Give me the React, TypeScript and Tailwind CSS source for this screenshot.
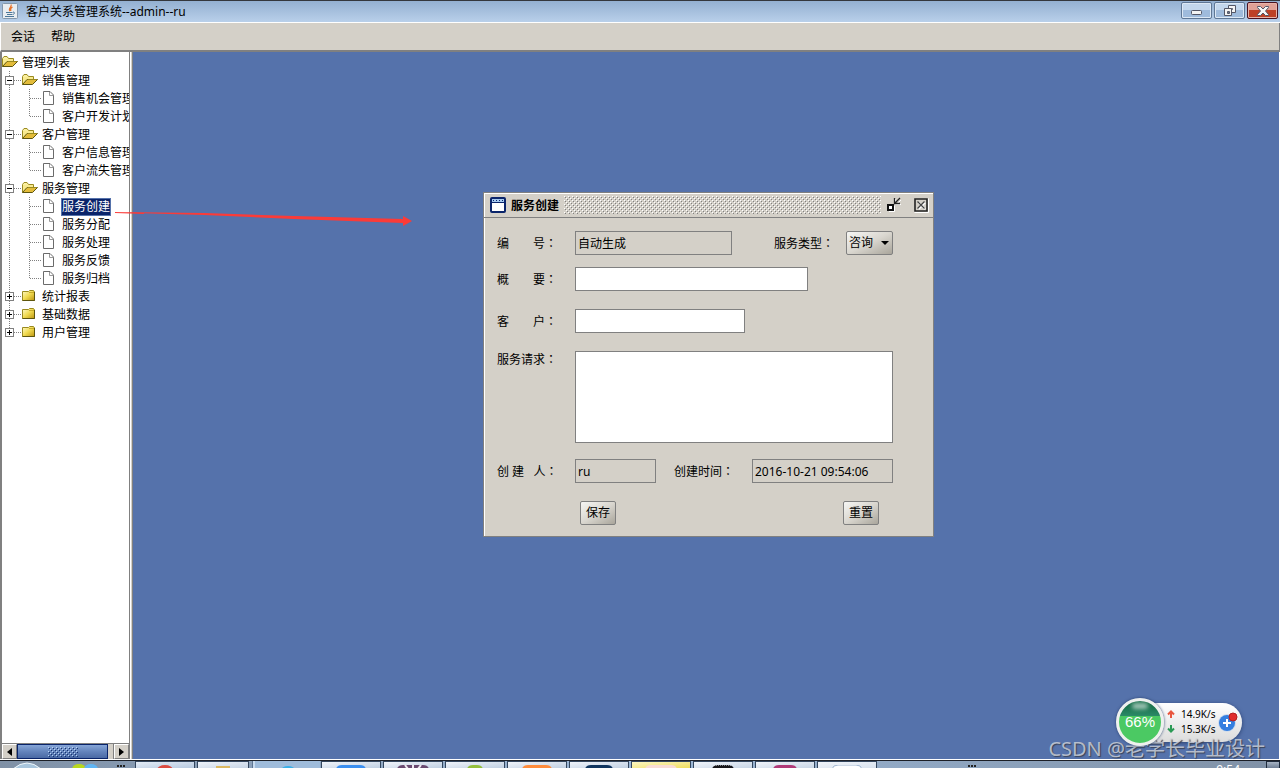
import { useState } from "react"
import type { ReactNode } from "react"

type TreeNode = { name: string; children?: string[]; open?: boolean }

const TREE: TreeNode[] = [
  { name: "销售管理", open: true, children: ["销售机会管理", "客户开发计划"] },
  { name: "客户管理", open: true, children: ["客户信息管理", "客户流失管理"] },
  { name: "服务管理", open: true, children: ["服务创建", "服务分配", "服务处理", "服务反馈", "服务归档"] },
  { name: "统计报表", children: [] },
  { name: "基础数据", children: [] },
  { name: "用户管理", children: [] },
]

function OpenFolder() {
  return (
    <svg width="20" height="18" className="shrink-0" aria-hidden="true">
      <path d="M0.5 13.5V5.5L2 3.5H5L6.5 5.5H11.5V8.5" fill="#fbf0a0" stroke="#9a8a20" />
      <path d="M1 13V6H11V9H5Z" fill="#f8ea90" />
      <path d="M0.5 13.5L5 8.5H15.5L10.5 13.5Z" fill="#e3bc3a" stroke="#5d550f" />
      <path d="M5.5 8.5H15" stroke="#9a8a20" />
    </svg>
  )
}

function ClosedFolder() {
  return (
    <svg width="20" height="18" className="shrink-0" aria-hidden="true">
      <defs>
        <linearGradient id="folder" x1="0" y1="0" x2="1" y2="1">
          <stop offset="0" stopColor="#fffbd0" />
          <stop offset="0.5" stopColor="#f0da50" />
          <stop offset="1" stopColor="#bd9410" />
        </linearGradient>
      </defs>
      <path d="M0.5 13.5V4.5H6.5L7.5 3.5H11.5L12.5 5V13.5Z" fill="url(#folder)" stroke="#9a8a20" />
      <path d="M7 5.5H12" stroke="#c9ac28" />
      <path d="M0.5 13.5H12.5V5" fill="none" stroke="#5d550f" />
    </svg>
  )
}

function FileIcon() {
  return (
    <svg width="20" height="18" className="shrink-0" aria-hidden="true">
      <path d="M1.5 2.5H8L11.5 6V15.5H1.5Z" fill="#fff" stroke="#6b6b6b" />
      <path d="M7.5 3V6.5H11.5" fill="none" stroke="#9a9a9a" />
    </svg>
  )
}

// dotted connector cell, with an optional branch to the right
function Branch({ down, branch }: { down: boolean; branch: boolean }) {
  return (
    <svg width="20" height="18" className="shrink-0" stroke="#808080" strokeDasharray="1 1" aria-hidden="true">
      {(down || branch) && <path d={down ? "M7.5 0V18" : "M7.5 0V10"} />}
      {branch && <path d="M8 9.5H20" />}
    </svg>
  )
}

function Tree() {
  const [nodes, setNodes] = useState(TREE)
  const [selected, setSelected] = useState("服务创建")

  const toggle = (name: string) =>
    setNodes(nodes.map((n) => (n.name === name ? { ...n, open: !n.open } : n)))

  return (
    <ul className="flex-1 overflow-hidden whitespace-nowrap pt-px">
      <li className="flex h-[18px] items-end">
        <OpenFolder />
        管理列表
      </li>
      {nodes.map((node, i) => {
        const last = i === nodes.length - 1
        return (
          <li key={node.name}>
            <div className="flex h-[18px] items-end">
              <button onClick={() => toggle(node.name)} aria-label={`${node.open ? "收起" : "展开"}${node.name}`}>
                <svg width="20" height="18" className="block">
                  <path d={last ? "M7.5 0V9" : "M7.5 0V18"} stroke="#808080" strokeDasharray="1 1" />
                  <path d="M12 9.5H20" stroke="#808080" strokeDasharray="1 1" />
                  <rect x="3.5" y="5.5" width="8" height="8" fill="#fff" stroke="#808080" />
                  <path d="M5 9.5H10" stroke="#000" />
                  {!node.open && <path d="M7.5 7V12" stroke="#000" />}
                </svg>
              </button>
              {node.open ? <OpenFolder /> : <ClosedFolder />}
              {node.name}
            </div>
            {node.open && (
              <ul>
                {node.children?.map((child, j) => (
                  <li key={child} className="flex h-[18px] items-end">
                    <Branch down={!last} branch={false} />
                    <Branch down={j < node.children!.length - 1} branch />
                    <FileIcon />
                    <button
                      onClick={() => setSelected(child)}
                      className={
                        selected === child
                          ? "h-4 bg-[#0a246a] leading-4 text-white outline outline-[#5572ab]"
                          : "h-4 leading-4"
                      }
                    >
                      {child}
                    </button>
                  </li>
                ))}
              </ul>
            )}
          </li>
        )
      })}
    </ul>
  )
}

function Bumps({ id, light, dark, className }: { id: string; light: string; dark: string; className: string }) {
  return (
    <svg className={className} aria-hidden="true">
      <defs>
        <pattern id={id} width="4" height="4" patternUnits="userSpaceOnUse">
          <path d="M0 0h1v1h-1zM2 2h1v1h-1z" fill={light} />
          <path d="M1 1h1v1h-1zM3 3h1v1h-1z" fill={dark} />
        </pattern>
      </defs>
      <rect width="100%" height="100%" fill={`url(#${id})`} />
    </svg>
  )
}

function ScrollBar() {
  return (
    <div className="flex h-4 border-t border-[#808080] bg-[#d4d0c8]">
      <button aria-label="向左滚动" className="flex w-[15px] items-center justify-center border border-t-white border-l-white border-r-[#808080] border-b-[#808080]">
        <svg width="5" height="8"><path d="M5 0V8L0 4Z" /></svg>
      </button>
      <div className="flex flex-1 border-r border-[#808080]">
        <div className="flex w-[91px] items-center justify-center border border-[#0a246a] bg-linear-to-b from-[#86a6d8] via-[#6484bc] to-[#4a69a4]">
          <Bumps id="thumb" light="#b9d3f5" dark="#17336f" className="h-[10px] w-[30px]" />
        </div>
      </div>
      <button aria-label="向右滚动" className="flex w-[15px] items-center justify-center border border-t-white border-l-white border-r-[#808080] border-b-[#808080]">
        <svg width="5" height="8"><path d="M0 0V8L5 4Z" /></svg>
      </button>
    </div>
  )
}

function TitleBar() {
  return (
    <header className="flex h-[23px] items-center border-t border-b border-t-[#34373c] border-b-white bg-linear-to-b from-[#94b0d1] to-[#b9d0ea] pl-[2px] pr-[2px]">
      <svg width="16" height="16" className="mb-px" aria-hidden="true">
        <rect x="0.5" y="0.5" width="15" height="15" rx="1" fill="#e9edf1" stroke="#8397ab" />
        <path d="M9 1.5C10.500 4 5.500 5 8 8.200M10.500 4C7.500 5.500 8.500 6.500 9 8" fill="none" stroke="#e8732a" strokeWidth="1.200" />
        <path d="M4 9.500H10.500M5 11.500H10M3 13.500H12M11 9C13.500 9 12.500 11.500 10.500 11.500" fill="none" stroke="#4d7899" />
      </svg>
      <h1 className="flex-1 pl-2">客户关系管理系统--admin--ru</h1>
      <div className="mb-[2px] flex gap-[2px]">
        <button aria-label="最小化" className="flex h-[17px] w-[31px] items-center justify-center rounded-[2px] border border-[#5f7795] bg-linear-to-b from-[#c3d7ed] from-50% to-[#9fbbdc] to-50% shadow-[inset_0_0_0_1px_#dce8f5]">
          <svg width="11" height="6" className="mt-1"><rect x="0.5" y="0.5" width="10" height="4" rx="1" fill="#f4f4f4" stroke="#535666" /></svg>
        </button>
        <button aria-label="还原" className="flex h-[17px] w-[31px] items-center justify-center rounded-[2px] border border-[#5f7795] bg-linear-to-b from-[#c3d7ed] from-50% to-[#9fbbdc] to-50% shadow-[inset_0_0_0_1px_#dce8f5]">
          <svg width="12" height="12" fill="#f4f4f4" stroke="#535666">
            <path d="M4.500 0.500H11.500V7.500H4.500ZM7.500 3.500H8.500V4.500H7.500Z" fillRule="evenodd" />
            <path d="M0.500 3.500H7.500V10.500H0.500ZM3.500 6.500H5.500V8.500H3.500Z" fillRule="evenodd" />
          </svg>
        </button>
        <button aria-label="关闭" className="flex h-[17px] w-[31px] items-center justify-center rounded-[2px] border border-[#4a1220] bg-linear-to-b from-[#e0a196] from-45% to-[#bd4026] to-45% shadow-[inset_0_0_0_1px_#e8b3a8]">
          <svg width="12" height="10">
            <path d="M0.500 0.500H3.500L6 3L8.500 0.500H11.500V1.500L8.500 5L11.500 8.500V9.500H8.500L6 7L3.500 9.500H0.500V8.500L3.500 5L0.500 1.500Z" fill="#f6f6f6" stroke="#535666" />
          </svg>
        </button>
      </div>
    </header>
  )
}

const readOnlyBox = "h-6 border border-[#808080] bg-[#d4d0c8] px-[2px] outline-none"
const textBox = "h-6 border border-[#808080] bg-white px-[2px] outline-none"
const pushButton =
  "h-6 w-9 rounded-[2px] border border-[#808080] bg-linear-to-br from-[#f6f6f4] via-[#d9d6cf] to-[#a9a59b]"

function Label({ id, children, className = "w-[78px]" }: { id: string; children: ReactNode; className?: string }) {
  return (
    <label htmlFor={id} className={`shrink-0 whitespace-pre ${className}`}>
      {children}
      <span className="font-['Noto_Sans_CJK_TC',sans-serif]">：</span>
    </label>
  )
}

function ServiceWindow() {
  const [summary, setSummary] = useState("")
  const [customer, setCustomer] = useState("")
  const [request, setRequest] = useState("")

  const handleReset = () => {
    setSummary("")
    setCustomer("")
    setRequest("")
  }

  return (
    <section className="absolute top-[140px] left-[350px] w-[451px] border border-[#808080] bg-[#d4d0c8] shadow-[inset_1px_1px_0_#fff]">
      <div className="flex h-[25px] items-center border-b border-[#808080] pr-1 pl-[6px]">
        <svg width="16" height="16" aria-hidden="true">
          <rect x="1" y="1" width="14" height="14" rx="1" fill="#fff" stroke="#0a246a" strokeWidth="2" />
          <path d="M2 2H14V5H2Z" fill="#a6caf0" />
          <path d="M2 5.500H14" stroke="#0a246a" />
          <path d="M3 3.500H13" stroke="#0a246a" strokeDasharray="1 2" />
        </svg>
        <h2 className="pt-px pl-[5px] font-bold">服务创建</h2>
        <Bumps id="bumps" light="#ffffff" dark="#808080" className="mx-[5px] h-[18px] min-w-0 flex-1" />
        <button aria-label="还原窗口" className="mr-[11px]">
          <svg width="16" height="16" className="block" fill="none">
            <path d="M3 9H8.500V14.500H3" stroke="#fff" />
            <path d="M3 8H7V13H2V8Z" stroke="#111" strokeWidth="2" />
            <path d="M3 9H6V12H3Z" fill="#fff" />
            <path d="M9.500 2V7.500H15M10.500 7.500L15 3" stroke="#fff" />
            <path d="M8.500 1V6.500H14M8.500 6.500L14 1" stroke="#222" strokeWidth="1.300" />
          </svg>
        </button>
        <button aria-label="关闭窗口">
          <svg width="16" height="16" className="block" fill="none">
            <path d="M1.500 15.500H15.500V1.500" stroke="#fff" />
            <path d="M2 2H14V14H2Z" stroke="#222" strokeWidth="1.600" />
            <path d="M5.500 5.500L12 12M12 5.500L5.500 12" stroke="#fff" strokeWidth="2" />
            <path d="M4.500 4.500L11.500 11.500M11.500 4.500L4.500 11.500" stroke="#444" strokeWidth="1.300" />
          </svg>
        </button>
      </div>

      <form className="px-[13px] pt-[13px] pb-[11px]" onSubmit={(e) => e.preventDefault()}>
        <div className="flex items-center">
          <Label id="number">编　　号</Label>
          <input id="number" readOnly value="自动生成" className={`w-[157px] ${readOnlyBox}`} />
          <Label id="type" className="ml-[42px] w-[72px]">服务类型</Label>
          <div className="relative">
            <select
              id="type"
              className="block h-6 w-[47px] appearance-none rounded-[2px] border border-[#808080] bg-linear-to-br from-[#f6f6f4] via-[#d9d6cf] to-[#a9a59b] pl-[2px] outline-none"
            >
              <option>咨询</option>
              <option>建议</option>
              <option>投诉</option>
            </select>
            <svg width="8" height="4" className="pointer-events-none absolute top-[10px] right-1">
              <path d="M0 0H8L4 4Z" />
            </svg>
          </div>
        </div>

        <div className="mt-3 flex items-center">
          <Label id="summary">概　　要</Label>
          <input id="summary" value={summary} onChange={(e) => setSummary(e.target.value)} className={`w-[233px] ${textBox}`} />
        </div>

        <div className="mt-[18px] flex items-center">
          <Label id="customer">客　　户</Label>
          <input id="customer" value={customer} onChange={(e) => setCustomer(e.target.value)} className={`w-[170px] ${textBox}`} />
        </div>

        <div className="mt-[18px] flex items-start">
          <Label id="request">服务请求</Label>
          <textarea
            id="request"
            value={request}
            onChange={(e) => setRequest(e.target.value)}
            className="block h-[92px] w-[318px] resize-none border border-[#808080] bg-white px-[2px] outline-none"
          />
        </div>

        <div className="mt-4 flex items-center">
          <Label id="creator">创 建   人</Label>
          <input id="creator" readOnly value="ru" className={`w-[81px] ${readOnlyBox}`} />
          <Label id="created" className="ml-[18px] w-[78px]">创建时间</Label>
          <input id="created" readOnly value="2016-10-21 09:54:06" className={`w-[141px] ${readOnlyBox}`} />
        </div>

        <div className="mt-[18px] flex justify-between pr-[41px] pl-[83px]">
          <button type="submit" className={pushButton}>保存</button>
          <button type="button" onClick={handleReset} className={pushButton}>重置</button>
        </div>
      </form>
    </section>
  )
}

function SpeedWidget() {
  return (
    <div className="absolute right-[37px] bottom-[13px] flex items-center">
      <div className="relative z-10 flex size-12 items-center justify-center rounded-full border-[3px] border-[#eef0ee] bg-linear-to-b from-[#17704a] from-10% via-[#2c8a68] via-36% to-[#4bc963] to-36% font-['Liberation_Sans',sans-serif] text-[15px] text-white shadow-[0_0_3px_#29406f]">
        <span className="absolute top-[2px] left-[13px] h-[6px] w-4 rounded-full bg-white/60 blur-[2px]" />
        66%
      </div>
      <div className="-ml-6 flex h-[39px] w-[102px] items-center rounded-r-full bg-linear-to-b from-white to-[#dcdcdc] pl-[27px] text-[10px] leading-[15px] text-black shadow-[0_1px_4px_#2c4170]">
        <svg width="8" height="26" className="mr-[6px]" fill="none" strokeWidth="2">
          <path d="M4 9V3M1 5.500L4 2.500L7 5.500" stroke="#e8573f" />
          <path d="M4 16V22M1 19.500L4 22.500L7 19.500" stroke="#2b9a55" />
        </svg>
        <div>
          <p>14.9K/s</p>
          <p>15.3K/s</p>
        </div>
        <svg width="20" height="20" className="ml-[2px] shrink-0">
          <circle cx="9" cy="11" r="9" fill="#cfdcec" />
          <circle cx="9" cy="11" r="8" fill="#347fe0" />
          <path d="M9 7V15M5 11H13" stroke="#fff" strokeWidth="2" />
          <circle cx="15" cy="5" r="4" fill="#e02d2d" stroke="#b32020" />
        </svg>
      </div>
    </div>
  )
}

const TASKS = [
  { color: "#3b8ff0", bg: "from-[#f0f4fa] to-[#bdcde0]", w: 30 },
  { color: "#6a4a70", bg: "from-[#f0f4fa] to-[#bdcde0]", w: 32 },
  { color: "#94bf3c", bg: "from-[#f0f4fa] to-[#bdcde0]", w: 16 },
  { color: "#ff8c3c", bg: "from-[#f0f4fa] to-[#bdcde0]", w: 30 },
  { color: "#10355f", bg: "from-[#f0f4fa] to-[#bdcde0]", w: 28 },
  { color: "#f8dcd4", bg: "from-[#fbf6c0] to-[#efdc50]", w: 32 },
  { color: "#16161a", bg: "from-[#f0f4fa] to-[#c6d4e4]", w: 22 },
  { color: "#b03a78", bg: "from-[#f0f4fa] to-[#c6d4e4]", w: 24 },
  { color: "#ffffff", bg: "from-[#f0f4fa] to-[#d6e0ec]", w: 30 },
]

function TaskIcon({ color, w }: { color: string; w: number }) {
  return (
    <svg width={w} height="4" className="block">
      <path d={`M0 4Q1 0 6 0H${w - 6}Q${w - 1} 0 ${w} 4Z`} fill={color} stroke={color === "#ffffff" ? "#9db4d0" : "none"} />
      {color === "#6a4a70" && <path d="M8 0L11 4M16 0V4M24 0L21 4" stroke="#efe9f0" strokeWidth="2" />}
      {color === "#16161a" && <path d="M2 0H20" stroke="#eef2f8" strokeDasharray="1 1" />}
    </svg>
  )
}

function Taskbar() {
  return (
    <footer className="relative flex h-[9px] shrink-0 items-start overflow-hidden border-t border-white bg-linear-to-r from-[#8091a6] via-[#9db9d9] to-[#8091a6] shadow-[inset_0_1px_0_#1c1f26]">
      <div className="flex w-[135px] shrink-0 items-start pt-[2px] pl-[13px]">
        <svg width="28" height="6"><path d="M0 7Q14 -5 28 7Z" fill="#a9c6dd" stroke="#eef6fb" /></svg>
        <svg width="30" height="6" className="ml-[30px]">
          <ellipse cx="8" cy="7" rx="7" ry="5" fill="#b9d81c" />
          <ellipse cx="20" cy="7" rx="7" ry="5" fill="#5fb5f4" />
        </svg>
        <svg width="10" height="5" className="ml-4" fill="#222"><path d="M0 3h2v2h-2zM3 3h2v2h-2zM6 3h2v2h-2z" /></svg>
      </div>
      <div className="mt-px flex h-2 w-[60px] shrink-0 items-end justify-center border border-b-0 border-[#33465e] bg-linear-to-br from-[#e4ecf6] to-[#b4c7de]">
        <svg width="18" height="5"><ellipse cx="9" cy="6" rx="8" ry="5" fill="#dc4b40" /></svg>
      </div>
      <div className="mt-px ml-[2px] flex h-2 w-[52px] shrink-0 items-end justify-center border border-b-0 border-[#33465e] bg-linear-to-br from-[#eef3fa] to-[#c4d2e3]">
        <svg width="14" height="3"><rect y="0" width="14" height="3" fill="#dcb860" /></svg>
      </div>
      <div className="mt-px h-2 w-1 shrink-0 border-r border-[#5d7592]" />
      <div className="mt-px flex h-2 w-[67px] shrink-0 items-end justify-center border-l-2 border-[#c9dcf0] bg-[#9fbcdb]">
        <svg width="16" height="4"><ellipse cx="8" cy="5" rx="7" ry="4" fill="#39b0e8" /></svg>
      </div>
      <div className="mt-px ml-px flex shrink-0 gap-[2px]">
        {TASKS.map((task) => (
          <div key={task.color} className={`flex h-2 w-[60px] items-end justify-center border border-b-0 border-[#33465e] bg-linear-to-br ${task.bg}`}>
            <TaskIcon color={task.color} w={task.w} />
          </div>
        ))}
      </div>
      <svg width="10" height="3" className="mt-[5px] ml-[91px] shrink-0" fill="#222"><path d="M0 0h2v2h-2zM3 0h2v2h-2zM6 0h2v2h-2z" /></svg>
      <time className="ml-auto pt-1 pr-[26px] text-white leading-3">9:54</time>
      <div className="mt-px h-2 w-[14px] shrink-0 border border-b-0 border-[#1f2b3c] bg-linear-to-b from-[#a8b4c4] to-[#66768c]" />
    </footer>
  )
}

export default function App() {
  return (
    <div className="relative flex h-screen flex-col overflow-hidden bg-[#d4d0c8] font-['Noto_Sans','Noto_Sans_CJK_SC',sans-serif] text-[12px] leading-4 text-black">
      <TitleBar />
      <nav className="flex h-[29px] items-center gap-4 border-r border-b-2 border-l border-r-[#808080] border-b-[#808080] border-l-white pt-px pl-[10px]">
        <button>会话</button>
        <button>帮助</button>
      </nav>

      <div className="flex min-h-0 flex-1">
        <aside className="flex w-[130px] shrink-0 flex-col border-r border-l-2 border-[#808080] bg-white">
          <Tree />
          <ScrollBar />
        </aside>
        <div className="w-[3px] shrink-0 border-r border-l border-r-[#808080] border-l-white bg-[#d4d0c8]" />
        <main className="relative flex-1 overflow-hidden border-r border-white bg-[#5572ab]">
          <ServiceWindow />
          <SpeedWidget />
        </main>
      </div>

      <svg width="300" height="20" className="pointer-events-none absolute top-[210px] left-[114px]" aria-hidden="true">
        <path d="M1 2L90 3L180 6L289 9V6L298 11L289 16V13L180 9L90 5L20 3Z" fill="#fb3b38" />
        <path d="M1 2.500L30 3.500" stroke="#fb3b38" />
      </svg>

      <Taskbar />

      <p className="pointer-events-none absolute right-[15px] bottom-[5px] text-[20px] leading-7 whitespace-nowrap text-[#d3d6dc]/80 [text-shadow:1px_1px_1px_#3a4358]">
        CSDN @老学长毕业设计
      </p>
    </div>
  )
}
